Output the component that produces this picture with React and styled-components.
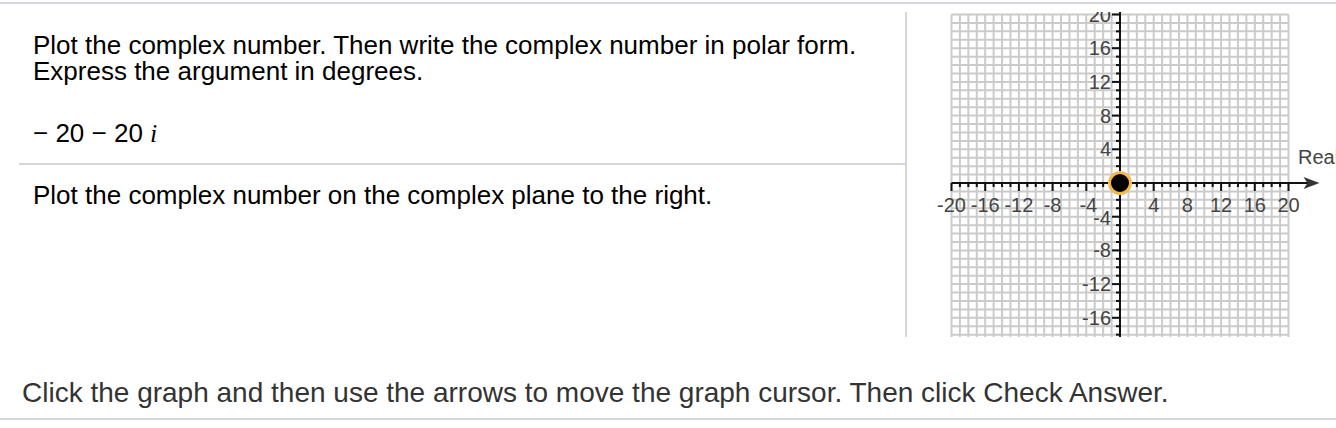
import React from 'react'
import styled, { createGlobalStyle } from 'styled-components'

const GlobalStyle = createGlobalStyle`
  html, body {
    margin: 0;
    padding: 0;
    background: #fff;
  }
  body {
    font-family: "Liberation Sans", Arial, sans-serif;
  }
`

const Page = styled.div`
  width: 1336px;
  height: 428px;
  overflow: hidden;
  padding-top: 2px;
  box-sizing: border-box;
`

const Frame = styled.div`
  border-top: 2px solid #d3d6e0;
  border-bottom: 2px solid #d3d6e0;
  padding-top: 8px;
  height: 418px;
  box-sizing: border-box;
`

const Row = styled.div`
  display: flex;
  height: 325px;
`

const LeftCol = styled.div`
  width: 886px;
  padding-left: 19px;
  border-right: 2px solid #d3d6e0;
`

const Section = styled.div`
  padding: ${p => p.$pad};
  padding-left: 14px;
  border-bottom: ${p => (p.$divider ? '2px solid #d3d6e0' : 'none')};
`

const Para = styled.p`
  margin: 0;
  font-size: 26px;
  line-height: 26px;
  color: #000;
  white-space: nowrap;
`

const Expr = styled.p`
  margin: 36px 0 0;
  font-size: 26px;
  line-height: 26px;
  color: #000;
`

const Imag = styled.span`
  font-family: "Liberation Serif", "Times New Roman", serif;
  font-style: italic;
`

const GraphCol = styled.div`
  flex: 1;
  overflow: hidden;
`

const Footer = styled.p`
  margin: 43px 0 0 22px;
  font-size: 28px;
  line-height: 26px;
  color: #333;
  white-space: nowrap;
`

const S = 8.425
const OX = 213
const OY = 171

function Graph() {
  const grid = []
  for (let i = -20; i <= 20; i++) {
    const x = OX + i * S
    grid.push(<line key={'v' + i} x1={x} y1={OY - 20 * S} x2={x} y2={OY + 20 * S} />)
    const y = OY - i * S
    grid.push(<line key={'h' + i} x1={OX - 20 * S} y1={y} x2={OX + 20 * S} y2={y} />)
  }

  const ticks = []
  for (let i = -20; i <= 20; i++) {
    if (i === 0) continue
    const big = i % 4 === 0
    const x = OX + i * S
    ticks.push(<line key={'tx' + i} x1={x} y1={OY} x2={x} y2={OY + (big ? 8 : 4)} />)
    const y = OY - i * S
    ticks.push(<line key={'ty' + i} x1={OX} y1={y} x2={OX - (big ? 8 : 4)} y2={y} />)
  }

  const labels = []
  for (let i = -20; i <= 20; i += 4) {
    if (i === 0) continue
    labels.push(
      <text key={'lx' + i} x={OX + i * S + (i === -4 ? 2 : 0)} y={OY + 29} textAnchor="middle">
        {i}
      </text>
    )
    labels.push(
      <text key={'ly' + i} x={OX - 9} y={OY - i * S + 7 + (i === -4 ? 1 : 0)} textAnchor="end">
        {i}
      </text>
    )
  }

  const end = OX + 20 * S
  return (
    <svg width="429" height="325" viewBox="0 0 429 325">
      <g stroke="#cbcbcb" strokeWidth="2">{grid}</g>
      <g stroke="#111" strokeWidth="2">
        <line x1={OX - 20 * S} y1={OY} x2={end + 20} y2={OY} />
        <line x1={OX} y1={0} x2={OX} y2={325} />
        {ticks}
      </g>
      <path
        d={`M ${end + 15} ${OY - 6} L ${end + 31} ${OY} L ${end + 15} ${OY + 6} L ${end + 19} ${OY} Z`}
        fill="#333"
      />
      <g fill="#444" fontSize="20" fontFamily='"Liberation Sans", Arial, sans-serif'>
        {labels}
        <text x={391} y={152}>Real</text>
      </g>
      <circle cx={OX} cy={OY} r="10.5" fill="#000" stroke="#f7b84b" strokeWidth="3" />
    </svg>
  )
}

export default function App() {
  return (
    <Page>
      <GlobalStyle />
      <Frame>
        <Row>
          <LeftCol>
            <Section $pad="20px 0 16px" $divider>
              <Para>Plot the complex number. Then write the complex number in polar form.</Para>
              <Para>Express the argument in degrees.</Para>
              <Expr>
                − 20 − 20 <Imag>i</Imag>
              </Expr>
            </Section>
            <Section $pad="17px 0 0">
              <Para>Plot the complex number on the complex plane to the right.</Para>
            </Section>
          </LeftCol>
          <GraphCol>
            <Graph />
          </GraphCol>
        </Row>
        <Footer>Click the graph and then use the arrows to move the graph cursor. Then click Check Answer.</Footer>
      </Frame>
    </Page>
  )
}
